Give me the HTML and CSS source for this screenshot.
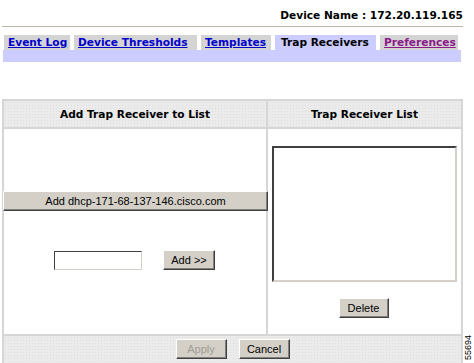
FILE: index.html
```html
<!DOCTYPE html>
<html lang="en">

<head>
  <meta charset="UTF-8">
  <title>Trap Receivers</title>
  <link rel="stylesheet" href="styles.css">
</head>

<body>
  <div class="device-name">Device Name : 172.20.119.165</div>
  <div class="rule"></div>

  <div class="tabs">
    <a class="tab" href="#">Event Log</a>
    <a class="tab" href="#">Device Thresholds</a>
    <a class="tab" href="#">Templates</a>
    <span class="tab active">Trap Receivers</span>
    <a class="tab visited" href="#">Preferences</a>
  </div>
  <div class="tab-bar"></div>

  <div class="panel">
    <div class="panel-head left">Add Trap Receiver to List</div>
    <div class="panel-head">Trap Receiver List</div>

    <div class="panel-cell add-cell">
      <button class="btn wide-btn">Add dhcp-171-68-137-146.cisco.com</button>
      <div class="add-row">
        <input type="text" class="host-input">
        <button class="btn add-btn">Add &gt;&gt;</button>
      </div>
    </div>

    <div class="panel-cell list-cell">
      <div class="listbox"></div>
      <button class="btn delete-btn">Delete</button>
    </div>

    <div class="panel-foot">
      <button class="btn foot-btn" disabled>Apply</button>
      <button class="btn foot-btn">Cancel</button>
    </div>
  </div>

  <div class="fig-id">55694</div>
</body>

</html>
```

FILE: styles.css
```css
/* General Styles */
body {
  font-family: "DejaVu Sans", Verdana, sans-serif;
  margin: 0;
  background-color: #fff;
  color: #000;
  position: relative;
  width: 474px;
  height: 363px;
  overflow: hidden;
}

.device-name {
  text-align: right;
  font-weight: bold;
  font-size: 10.6px;
  padding: 9px 11px 0 0;
  height: 26px;
  box-sizing: border-box;
  line-height: 12px;
}

.rule {
  margin: 0 11px 0 2px;
  border-top: 1px solid #bfb7a6;
}

/* Tabs */
.tabs {
  display: flex;
  gap: 4px;
  margin: 8px 0 0 4px;
}

.tab {
  flex-shrink: 0;
  white-space: nowrap;
  background-color: #d4d4d4;
  font-size: 10.6px;
  font-weight: bold;
  line-height: 15px;
  height: 15px;
  padding: 0 4px;
  color: #0000cc;
  box-sizing: border-box;
}

.tab:nth-child(1) { width: 66px; }
.tab:nth-child(2) { width: 123px; }
.tab:nth-child(3) { width: 70px; }
.tab:nth-child(4) { width: 101px; }
.tab:nth-child(5) { width: 78px; }

.tab.active {
  background-color: #ccccff;
  color: #000;
  padding: 0 6px;
}

.tab.visited {
  color: #8b1a8b;
}

.tab-bar {
  margin: 0 13px 0 3px;
  height: 12px;
  background-color: #ccccff;
}

/* Panel */
.panel {
  margin: 37px 0 0 2px;
  width: 461px;
  border: 2px solid #d6d6d6;
  border-bottom: none;
  box-sizing: border-box;
  display: grid;
  grid-template-columns: 264px 1fr;
  grid-template-rows: 28px 205px 30px;
}

.panel-head {
  background-color: #ebebeb;
  background-image: radial-gradient(#dedede 0.6px, transparent 0.8px);
  background-size: 3px 3px;
  border-bottom: 2px solid #d6d6d6;
  display: flex;
  align-items: center;
  justify-content: center;
  font-weight: bold;
  font-size: 10.6px;
}

.panel-head.left,
.add-cell {
  border-right: 2px solid #d6d6d6;
}

.panel-cell {
  display: flex;
  flex-direction: column;
  align-items: center;
}

.add-cell {
  align-items: stretch;
}

.panel-foot {
  grid-column: 1 / span 2;
  background-color: #ebebeb;
  background-image: radial-gradient(#dedede 0.6px, transparent 0.8px);
  background-size: 3px 3px;
  border-top: 2px solid #d6d6d6;
  display: flex;
  justify-content: center;
  gap: 12px;
  padding-top: 3px;
}

/* Buttons */
.btn {
  font-family: "Liberation Sans", Arial, sans-serif;
  font-size: 11px;
  color: #000;
  background-color: #d4d0c8;
  border: 1px solid;
  border-color: #fff #404040 #404040 #fff;
  box-shadow: inset -1px -1px 0 #808080;
  padding: 0;
  height: 20px;
}

.btn:disabled {
  color: #a09c94;
}

.wide-btn {
  margin-top: 62px;
  height: 20px;
  width: 265px;
  margin-left: -1px;
}

.add-row {
  display: flex;
  align-items: center;
  gap: 21px;
  margin: 39px 0 0 50px;
}

.host-input {
  width: 88px;
  height: 19px;
  box-sizing: border-box;
  border: 1px solid;
  border-color: #404040 #d4d0c8 #d4d0c8 #404040;
  padding: 0;
}

.add-btn {
  width: 52px;
}

.listbox {
  margin-top: 17px;
  width: 185px;
  height: 136px;
  box-sizing: border-box;
  border: 2px solid;
  border-color: #404040 #d4d0c8 #d4d0c8 #404040;
  background-color: #fff;
}

.delete-btn {
  margin-top: 16px;
  width: 50px;
  margin-left: -2px;
}

.foot-btn {
  width: 51px;
}

.fig-id {
  position: absolute;
  right: 1px;
  bottom: 3px;
  font-family: "Liberation Sans", Arial, sans-serif;
  font-size: 9px;
  writing-mode: vertical-rl;
  transform: rotate(180deg);
}
```
